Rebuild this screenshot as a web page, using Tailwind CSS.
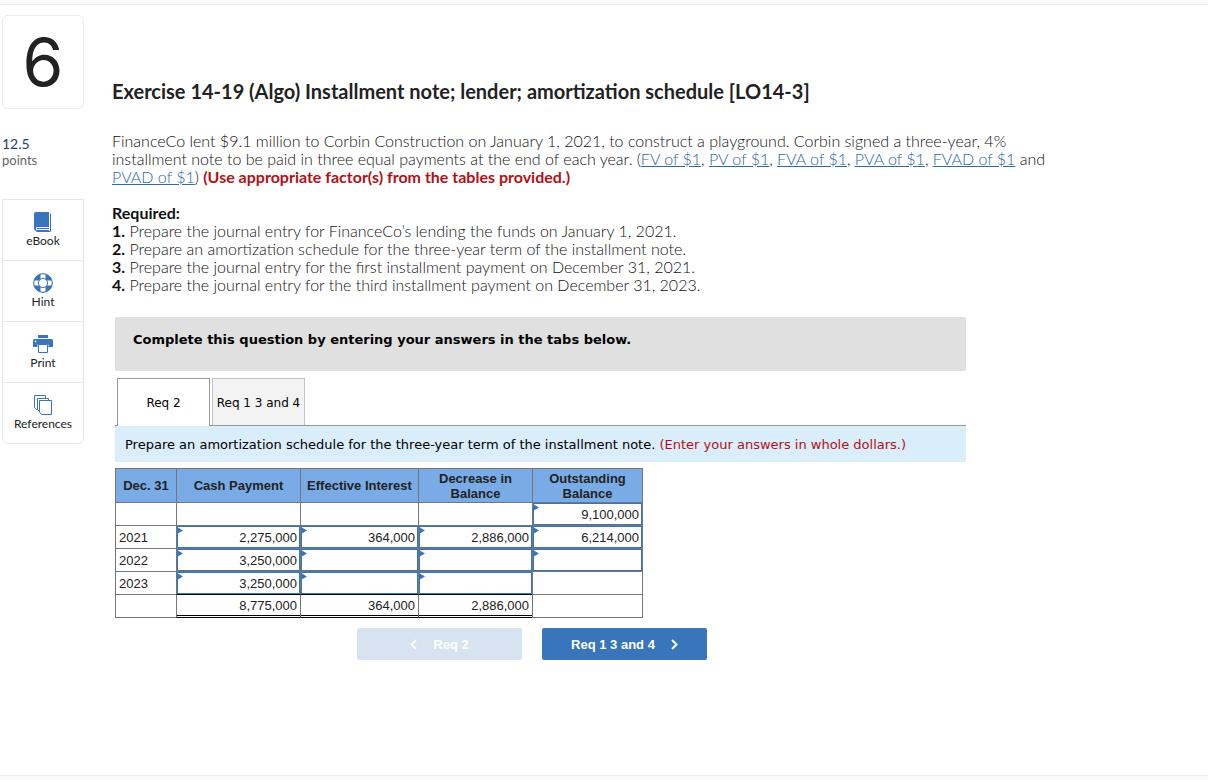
<!DOCTYPE html>
<html lang="en">
<head>
<meta charset="utf-8">
<meta name="viewport" content="width=device-width, initial-scale=1">
<title>Exercise 14-19</title>
<script src="https://cdn.jsdelivr.net/npm/@tailwindcss/browser@4"></script>
</head>
<body class="min-h-screen flex flex-col bg-white text-[#222] font-['Lato',sans-serif]">
<div class="h-[5px] shrink-0 bg-[#fafafa] border-b border-[#ececec]"></div>
<div class="flex grow gap-7 pl-0.5">
  <aside class="w-[82px] shrink-0 pt-2.5">
    <div class="h-[94px] flex items-center justify-center rounded-md border border-[#ebebeb] text-[66px] leading-none font-['Inter',sans-serif]">6</div>
    <div class="pt-[26px] text-[14px] leading-[17px] text-[#1d3f7a]">12.5</div>
    <div class="text-[13px] leading-4 text-[#666]">points</div>
    <nav class="mt-[31px] rounded-b-md border border-[#e6e6e6] divide-y divide-[#e6e6e6] text-[12px] leading-4 text-center">
      <a href="#ebook" class="flex h-[61px] flex-col items-center gap-px pt-3">
        <svg class="size-5" viewBox="0 0 20 20" aria-hidden="true"><path fill="#3875ba" d="M3 0h13v15H4q-1 0-1 1.500t1 1.500h12v1H4q-3 0-3-3V2q0-2 2-2z"/><path fill="none" stroke="#3875ba" d="M17.500 1.500v18H3.500M4 16.500h12"/></svg>
        eBook</a>
      <a href="#hint" class="flex h-[61px] flex-col items-center gap-px pt-3">
        <svg class="size-5" viewBox="0 0 20 20" aria-hidden="true"><circle cx="10" cy="10" r="7" fill="none" stroke="#3875ba" stroke-width="5"/><path stroke="#fff" stroke-width="5" d="M10 1v5M10 14v5M1 10h5M14 10h5"/><circle cx="10" cy="10" r="9.300" fill="none" stroke="#3875ba"/><circle cx="10" cy="10" r="4.600" fill="none" stroke="#3875ba"/></svg>
        Hint</a>
      <a href="#print" class="flex h-[61px] flex-col items-center gap-px pt-3">
        <svg class="size-5" viewBox="0 0 20 20" aria-hidden="true"><path fill="#3875ba" d="M5 1h10v3H5zM1.500 5h17Q20 5 20 6.500V13h-4.500v-2.500h-11V13H0V6.500Q0 5 1.500 5z"/><circle cx="2.500" cy="7.300" r=".9" fill="#fff"/><path fill="#fff" stroke="#3875ba" d="M5.500 10.500h9v8h-9z"/></svg>
        Print</a>
      <a href="#references" class="flex h-[60px] flex-col items-center gap-px pt-3">
        <svg class="size-5" viewBox="0 0 20 20" aria-hidden="true"><g fill="#fff" stroke="#3875ba"><path d="M1.500.5h11v14h-9l-2-2z"/><path d="M4.500 3.500h11v13h-9l-2-2z"/><path d="M6.500 5.500H18.500v14H8.500l-2-2.500z"/></g></svg>
        References</a>
    </nav>
  </aside>
  <main class="grow min-w-0 pt-[74px] pr-4">
    <h1 class="text-[20px] leading-6 font-bold">Exercise 14-19 (Algo) Installment note; lender; amortization schedule [LO14-3]</h1>
    <div class="max-w-[940px] pt-[29px] text-[16px] leading-[18px] font-light text-[#111]">
      <p>FinanceCo lent $9.1 million to Corbin Construction on January 1, 2021, to construct a playground. Corbin signed a three-year, 4% installment note to be paid in three equal payments at the end of each year. (<a href="#fv" class="text-[#2a68b0] underline">FV of $1</a>, <a href="#pv" class="text-[#2a68b0] underline">PV of $1</a>, <a href="#fva" class="text-[#2a68b0] underline">FVA of $1</a>, <a href="#pva" class="text-[#2a68b0] underline">PVA of $1</a>, <a href="#fvad" class="text-[#2a68b0] underline">FVAD of $1</a> and <a href="#pvad" class="text-[#2a68b0] underline">PVAD of $1</a>) <strong class="font-bold text-[#b11116]">(Use appropriate factor(s) from the tables provided.)</strong></p>
      <p class="pt-[18px] font-bold">Required:</p>
      <p><b class="font-bold">1.</b> Prepare the journal entry for FinanceCo’s lending the funds on January 1, 2021.</p>
      <p><b class="font-bold">2.</b> Prepare an amortization schedule for the three-year term of the installment note.</p>
      <p><b class="font-bold">3.</b> Prepare the journal entry for the first installment payment on December 31, 2021.</p>
      <p><b class="font-bold">4.</b> Prepare the journal entry for the third installment payment on December 31, 2023.</p>
    </div>
    <section class="ml-[3px] mt-[23px] max-w-[851px] text-black font-['DejaVu_Sans',sans-serif]">
      <h2 class="bg-[#e0e0e0] px-[18px] pt-3.5 pb-[22px] text-[13px] leading-[18px] font-bold">Complete this question by entering your answers in the tabs below.</h2>
      <div class="mt-[7px] flex gap-0.5 border-b border-[#999] pl-0.5 text-[12px]" role="tablist">
        <button role="tab" aria-selected="true" class="-mb-px h-12 w-[93px] border border-b-0 border-[#999] bg-white">Req 2</button>
        <button role="tab" aria-selected="false" class="h-[47px] w-[93px] whitespace-nowrap border border-b-0 border-[#c4c4c4] bg-[#f3f3f3] pt-0.5">Req 1 3 and 4</button>
      </div>
      <p class="bg-[#d9edfa] px-2.5 pt-2.5 pb-2 text-[13px] leading-[18px]">Prepare an amortization schedule for the three-year term of the installment note. <span class="text-[#b11116]">(Enter your answers in whole dollars.)</span></p>
      <table class="mt-1.5 w-[528px] table-fixed border-separate border-spacing-0 border-r border-[#767676] text-[13px] leading-[15px] text-[#222] font-['Liberation_Sans',sans-serif]">
        <colgroup><col class="w-[61px]"><col class="w-[124px]"><col class="w-[118px]"><col class="w-[114px]"><col class="w-[110px]"></colgroup>
        <thead>
          <tr class="h-[34px] bg-[#79ace6]">
            <th class="border-l border-t border-[#767676] p-0">Dec. 31</th><th class="border-l border-t border-[#767676] p-0">Cash Payment</th><th class="border-l border-t border-[#767676] p-0">Effective Interest</th><th class="border-l border-t border-[#767676] p-0">Decrease in<br>Balance</th><th class="border-l border-t border-[#767676] p-0">Outstanding<br>Balance</th>
          </tr>
        </thead>
        <tbody>
          <tr class="h-[23px]">
            <td class="border-l border-t border-[#767676] p-0"></td><td class="border-l border-t border-[#767676] p-0"></td><td class="border-l border-t border-[#767676] p-0"></td><td class="border-l border-t border-[#767676] p-0"></td>
            <td class="relative border-l border-t border-[#767676] p-0"><input aria-label="Opening outstanding balance" value="9,100,000" class="block h-[22px] w-full border border-[#3875ba] pr-0.5 text-right"><svg class="absolute left-0 top-px h-[7px] w-[6px]" viewBox="0 0 6 7" aria-hidden="true"><path fill="#3875ba" d="M0 0l6 3.500-6 3.500z"/></svg></td>
          </tr>
          <tr class="h-[23px]">
            <td class="border-l border-t border-[#767676] p-0 pl-[3px]">2021</td>
            <td class="relative border-l border-t border-[#767676] p-0"><input aria-label="2021 cash payment" value="2,275,000" class="block h-[22px] w-full border border-[#3875ba] pr-0.5 text-right"><svg class="absolute left-0 top-px h-[7px] w-[6px]" viewBox="0 0 6 7" aria-hidden="true"><path fill="#3875ba" d="M0 0l6 3.500-6 3.500z"/></svg></td>
            <td class="relative border-l border-t border-[#767676] p-0"><input aria-label="2021 effective interest" value="364,000" class="block h-[22px] w-full border border-[#3875ba] pr-0.5 text-right"><svg class="absolute left-0 top-px h-[7px] w-[6px]" viewBox="0 0 6 7" aria-hidden="true"><path fill="#3875ba" d="M0 0l6 3.500-6 3.500z"/></svg></td>
            <td class="relative border-l border-t border-[#767676] p-0"><input aria-label="2021 decrease in balance" value="2,886,000" class="block h-[22px] w-full border border-[#3875ba] pr-0.5 text-right"><svg class="absolute left-0 top-px h-[7px] w-[6px]" viewBox="0 0 6 7" aria-hidden="true"><path fill="#3875ba" d="M0 0l6 3.500-6 3.500z"/></svg></td>
            <td class="relative border-l border-t border-[#767676] p-0"><input aria-label="2021 outstanding balance" value="6,214,000" class="block h-[22px] w-full border border-[#3875ba] pr-0.5 text-right"><svg class="absolute left-0 top-px h-[7px] w-[6px]" viewBox="0 0 6 7" aria-hidden="true"><path fill="#3875ba" d="M0 0l6 3.500-6 3.500z"/></svg></td>
          </tr>
          <tr class="h-[23px]">
            <td class="border-l border-t border-[#767676] p-0 pl-[3px]">2022</td>
            <td class="relative border-l border-t border-[#767676] p-0"><input aria-label="2022 cash payment" value="3,250,000" class="block h-[22px] w-full border border-[#3875ba] pr-0.5 text-right"><svg class="absolute left-0 top-px h-[7px] w-[6px]" viewBox="0 0 6 7" aria-hidden="true"><path fill="#3875ba" d="M0 0l6 3.500-6 3.500z"/></svg></td>
            <td class="relative border-l border-t border-[#767676] p-0"><input aria-label="2022 effective interest" class="block h-[22px] w-full border border-[#3875ba] pr-0.5 text-right"><svg class="absolute left-0 top-px h-[7px] w-[6px]" viewBox="0 0 6 7" aria-hidden="true"><path fill="#3875ba" d="M0 0l6 3.500-6 3.500z"/></svg></td>
            <td class="relative border-l border-t border-[#767676] p-0"><input aria-label="2022 decrease in balance" class="block h-[22px] w-full border border-[#3875ba] pr-0.5 text-right"><svg class="absolute left-0 top-px h-[7px] w-[6px]" viewBox="0 0 6 7" aria-hidden="true"><path fill="#3875ba" d="M0 0l6 3.500-6 3.500z"/></svg></td>
            <td class="relative border-l border-t border-[#767676] p-0"><input aria-label="2022 outstanding balance" class="block h-[22px] w-full border border-[#3875ba] pr-0.5 text-right"><svg class="absolute left-0 top-px h-[7px] w-[6px]" viewBox="0 0 6 7" aria-hidden="true"><path fill="#3875ba" d="M0 0l6 3.500-6 3.500z"/></svg></td>
          </tr>
          <tr class="h-[23px]">
            <td class="border-l border-t border-[#767676] p-0 pl-[3px]">2023</td>
            <td class="relative border-l border-t border-[#767676] p-0"><input aria-label="2023 cash payment" value="3,250,000" class="block h-[22px] w-full border border-[#3875ba] pr-0.5 text-right"><svg class="absolute left-0 top-px h-[7px] w-[6px]" viewBox="0 0 6 7" aria-hidden="true"><path fill="#3875ba" d="M0 0l6 3.500-6 3.500z"/></svg></td>
            <td class="relative border-l border-t border-[#767676] p-0"><input aria-label="2023 effective interest" class="block h-[22px] w-full border border-[#3875ba] pr-0.5 text-right"><svg class="absolute left-0 top-px h-[7px] w-[6px]" viewBox="0 0 6 7" aria-hidden="true"><path fill="#3875ba" d="M0 0l6 3.500-6 3.500z"/></svg></td>
            <td class="relative border-l border-t border-[#767676] p-0"><input aria-label="2023 decrease in balance" class="block h-[22px] w-full border border-[#3875ba] pr-0.5 text-right"><svg class="absolute left-0 top-px h-[7px] w-[6px]" viewBox="0 0 6 7" aria-hidden="true"><path fill="#3875ba" d="M0 0l6 3.500-6 3.500z"/></svg></td>
            <td class="border-l border-t border-[#767676] p-0"></td>
          </tr>
          <tr class="h-6 text-right">
            <td class="border-l border-y border-[#767676] p-0"></td>
            <td class="border-l border-y border-[#767676] border-y-black p-0 pb-px"><div class="h-[21px] border-b border-black pr-[3px] leading-[21px]">8,775,000</div></td>
            <td class="border-l border-y border-[#767676] border-y-black p-0 pb-px"><div class="h-[21px] border-b border-black pr-[3px] leading-[21px]">364,000</div></td>
            <td class="border-l border-y border-[#767676] border-y-black p-0 pb-px"><div class="h-[21px] border-b border-black pr-[3px] leading-[21px]">2,886,000</div></td>
            <td class="border-l border-y border-[#767676] p-0"></td>
          </tr>
        </tbody>
      </table>
      <div class="mt-2.5 flex justify-center gap-5 pr-[17px] text-[13px] font-bold text-white font-['Liberation_Sans',sans-serif]">
        <button class="flex h-8 w-[165px] items-center justify-center gap-4 rounded-xs bg-[#d8e3f1] pt-px"><svg class="h-[11px] w-[7px]" viewBox="0 0 7 11" aria-hidden="true"><path fill="none" stroke="#fff" stroke-width="2" d="M6 1L1.500 5.500 6 10"/></svg>Req 2</button>
        <button class="flex h-8 w-[165px] items-center justify-center gap-4 rounded-xs bg-[#3875ba] pt-px">Req 1 3 and 4<svg class="h-[11px] w-[7px]" viewBox="0 0 7 11" aria-hidden="true"><path fill="none" stroke="#fff" stroke-width="2" d="M1 1l4.500 4.500L1 10"/></svg></button>
      </div>
    </section>
  </main>
</div>
<div class="h-[5px] shrink-0 bg-[#fafafa] border-t border-[#ececec]"></div>
</body>
</html>
